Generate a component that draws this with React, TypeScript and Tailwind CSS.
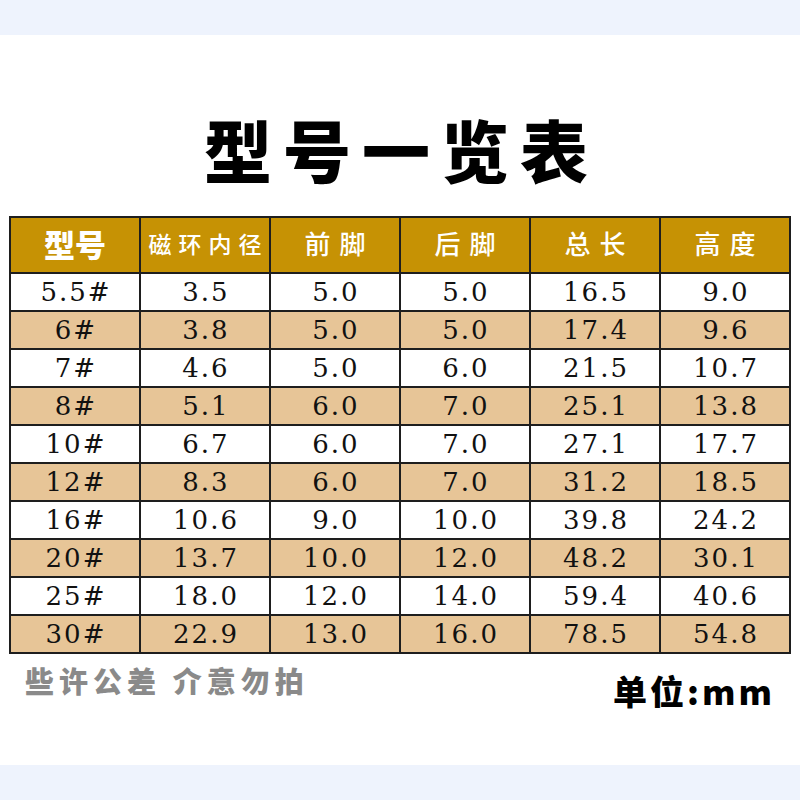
import React from "react";

const rows: string[][] = [
  ["5.5#", "3.5", "5.0", "5.0", "16.5", "9.0"],
  ["6#", "3.8", "5.0", "5.0", "17.4", "9.6"],
  ["7#", "4.6", "5.0", "6.0", "21.5", "10.7"],
  ["8#", "5.1", "6.0", "7.0", "25.1", "13.8"],
  ["10#", "6.7", "6.0", "7.0", "27.1", "17.7"],
  ["12#", "8.3", "6.0", "7.0", "31.2", "18.5"],
  ["16#", "10.6", "9.0", "10.0", "39.8", "24.2"],
  ["20#", "13.7", "10.0", "12.0", "48.2", "30.1"],
  ["25#", "18.0", "12.0", "14.0", "59.4", "40.6"],
  ["30#", "22.9", "13.0", "16.0", "78.5", "54.8"],
];

const headers = ["磁环内径", "前脚", "后脚", "总长", "高度"];

const cjk = "font-['Noto_Sans_CJK_SC',sans-serif]";

export default function App() {
  return (
    <div className="w-[800px] h-[800px] flex flex-col bg-white overflow-hidden">
      <div className="h-[35px] bg-[#eef3fd] shrink-0" />
      <div className="h-[181px] shrink-0 pt-[80px] flex justify-center">
        <div
          className={`${cjk} text-[68px] leading-none font-black text-black tracking-[11px] pl-[3px]`}
        >
          型号一览表
        </div>
      </div>
      <div className="px-[9px]">
        <table className="w-[781px] border-collapse border-2 border-[#1e1e1e] table-fixed">
          <thead>
            <tr className="h-[56px] bg-[#c69204]">
              <th className="w-[130px] border-2 border-[#1e1e1e] p-0">
                <span className={`${cjk} text-[31px] font-black text-white leading-none`}>型号</span>
              </th>
              {headers.map((h, i) => (
                <th key={h} className="w-[130px] border-2 border-[#1e1e1e] p-0">
                  <span
                    className={`${cjk} font-medium text-white leading-none ${
                      i === 0 ? "text-[23px] tracking-[7px] pl-[7px]" : "text-[26px] tracking-[9px] pl-[9px]"
                    }`}
                  >
                    {h}
                  </span>
                </th>
              ))}
            </tr>
          </thead>
          <tbody>
            {rows.map((r, ri) => (
              <tr
                key={ri}
                className={`h-[38px] ${ri % 2 === 1 ? "bg-[#e7c597]" : "bg-white"}`}
              >
                {r.map((c, ci) => (
                  <td
                    key={ci}
                    className="border-2 border-[#1e1e1e] p-0 text-center font-['DejaVu_Serif',serif] text-[26px] leading-none text-[#111] tracking-[2px] pl-[2px]"
                  >
                    {c}
                  </td>
                ))}
              </tr>
            ))}
          </tbody>
        </table>
      </div>
      <div className="flex justify-between items-start pl-[25px] pr-[25px] pt-[12px]">
        <div className={`${cjk} text-[29px] font-black leading-none text-[#8a8a8a] tracking-[5px]`}>
          些许公差 介意勿拍
        </div>
        <div className={`${cjk} text-[34px] font-black leading-none text-black mt-[8px] tracking-[3px]`}>
          单位:mm
        </div>
      </div>
      <div className="flex-1" />
      <div className="h-[35px] bg-[#eef3fd] shrink-0" />
    </div>
  );
}
